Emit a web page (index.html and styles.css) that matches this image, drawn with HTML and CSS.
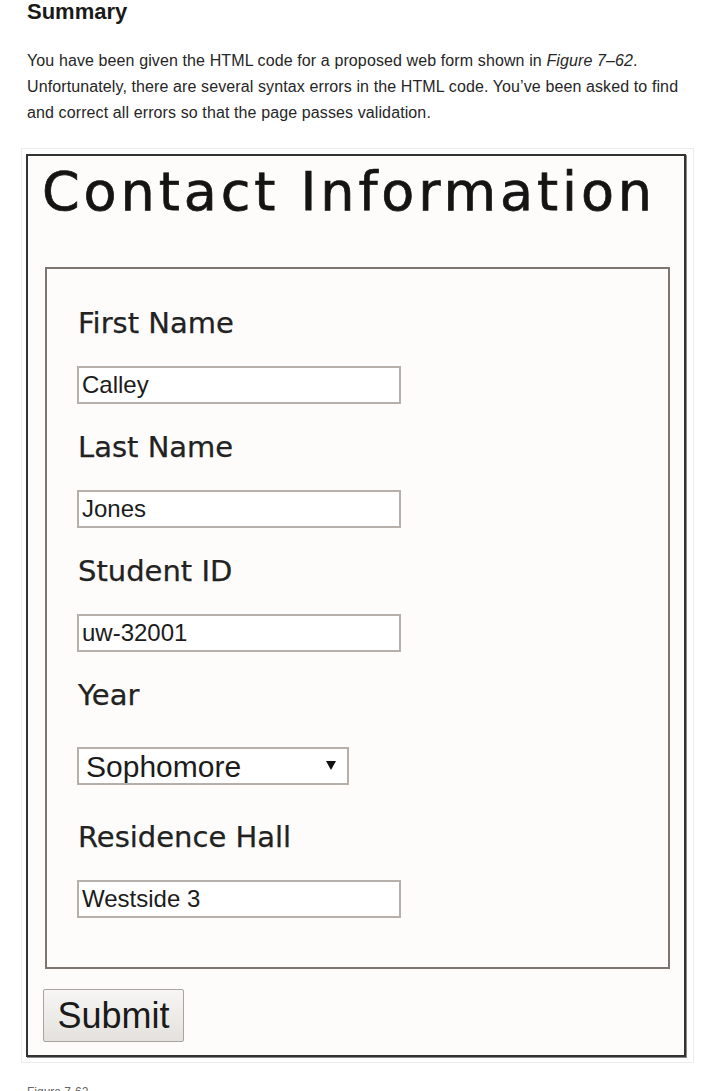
FILE: index.html
```html
<!DOCTYPE html>
<html lang="en">
<head>
<meta charset="utf-8">
<title>Summary</title>
<link rel="stylesheet" href="styles.css">
</head>
<body>
<main class="page">
  <h2 class="title">Summary</h2>
  <p class="lead">You have been given the HTML code for a proposed web form shown in <em>Figure 7–62</em>. Unfortunately, there are several syntax errors in the HTML code. You’ve been asked to find and correct all errors so that the page passes validation.</p>
  <figure class="shot">
    <div class="window">
      <h1 class="form-title">Contact Information</h1>
      <form class="contact" onsubmit="return false">
        <fieldset class="fields">
          <label class="lbl" for="fn">First Name</label>
          <input class="txt" id="fn" type="text" value="Calley">
          <label class="lbl" for="ln">Last Name</label>
          <input class="txt" id="ln" type="text" value="Jones">
          <label class="lbl" for="sid">Student ID</label>
          <input class="txt" id="sid" type="text" value="uw-32001">
          <label class="lbl lbl-year" for="yr">Year</label>
          <span class="sel-wrap">
            <select class="sel" id="yr">
              <option>Freshman</option>
              <option selected>Sophomore</option>
              <option>Junior</option>
              <option>Senior</option>
            </select>
          </span>
          <label class="lbl lbl-after-sel" for="rh">Residence Hall</label>
          <input class="txt" id="rh" type="text" value="Westside 3">
        </fieldset>
        <button class="submit" type="submit">Submit</button>
      </form>
    </div>
  </figure>
  <p class="caption">Figure 7-62</p>
</main>
</body>
</html>
```

FILE: styles.css
```css
html, body {
  margin: 0;
  padding: 0;
  background: #ffffff;
}

.page {
  padding: 0 0 0 27px;
  width: 660px;
  font-family: "Liberation Sans", Arial, sans-serif;
  color: #1f1f1f;
}

.title {
  margin: 0;
  font-size: 22px;
  line-height: 24px;
  font-weight: bold;
  color: #1a1a1a;
}

.lead {
  margin: 24px 0 0 0;
  font-size: 16px;
  line-height: 26px;
  letter-spacing: 0.11px;
  color: #262626;
}

.lead em {
  font-style: italic;
}

.shot {
  margin: 22px 0 0 -6px;
  width: 673px;
  border: 1px solid #ececec;
  padding: 5px 4px 5px 4px;
  box-sizing: border-box;
}

.window {
  background: #fdfcfa;
  border: 2px solid #333333;
  box-shadow: 1px 1px 0 #8a8a8a;
  padding: 0 0 13px 14px;
  margin-right: 3px;
}

.form-title {
  margin: 0;
  padding-top: 4px;
  font-family: "DejaVu Sans", sans-serif;
  font-weight: normal;
  font-size: 54px;
  line-height: 64px;
  letter-spacing: 3.9px;
  -webkit-text-stroke: 0.7px #141414;
  color: #141414;
}

.contact {
  margin: 43px 0 0 0;
}

.fields {
  margin: 0 14px 0 3px;
  padding: 36px 0 49px 30px;
  border: 2px solid #7d7670;
  display: flex;
  flex-direction: column;
  align-items: flex-start;
  min-inline-size: 0;
}

.lbl {
  display: block;
  font-family: "DejaVu Sans", sans-serif;
  font-size: 29px;
  line-height: 36px;
  color: #222222;
  -webkit-text-stroke: 0.25px #222222;
  margin: 0 0 25px 1px;
}

.lbl-year {
  margin-bottom: 34px;
}

.lbl-after-sel {
  margin-top: 34px;
}

.txt + .lbl {
  margin-top: 25px;
}

.txt {
  width: 324px;
  height: 38px;
  box-sizing: border-box;
  margin: 0;
  padding: 0 0 0 3px;
  border: 2px solid #b7b0aa;
  background: #ffffff;
  font-family: "Liberation Sans", Arial, sans-serif;
  font-size: 24px;
  color: #1c1c1c;
  outline: none;
}

.sel-wrap {
  position: relative;
  display: block;
  width: 272px;
  height: 38px;
}

.sel {
  appearance: none;
  -webkit-appearance: none;
  width: 272px;
  height: 38px;
  box-sizing: border-box;
  margin: 0;
  padding: 0 0 0 7px;
  border: 2px solid #b7b0aa;
  border-radius: 0;
  background: #ffffff;
  font-family: "Liberation Sans", Arial, sans-serif;
  font-size: 30px;
  color: #1c1c1c;
  outline: none;
}

.sel-wrap::after {
  content: "";
  position: absolute;
  right: 13px;
  top: 14px;
  border-left: 5px solid transparent;
  border-right: 5px solid transparent;
  border-top: 9px solid #111111;
  pointer-events: none;
}

.submit {
  margin: 20px 0 0 1px;
  width: 141px;
  height: 53px;
  box-sizing: border-box;
  padding: 0;
  border: 1px solid #a8a49f;
  border-radius: 2px;
  background: linear-gradient(#f7f6f4, #e4e1dd);
  font-family: "Liberation Sans", Arial, sans-serif;
  font-size: 36px;
  color: #1a1a1a;
}

.caption {
  margin: 21px 0 0 0;
  font-size: 12px;
  line-height: 16px;
  color: #666666;
}
```
